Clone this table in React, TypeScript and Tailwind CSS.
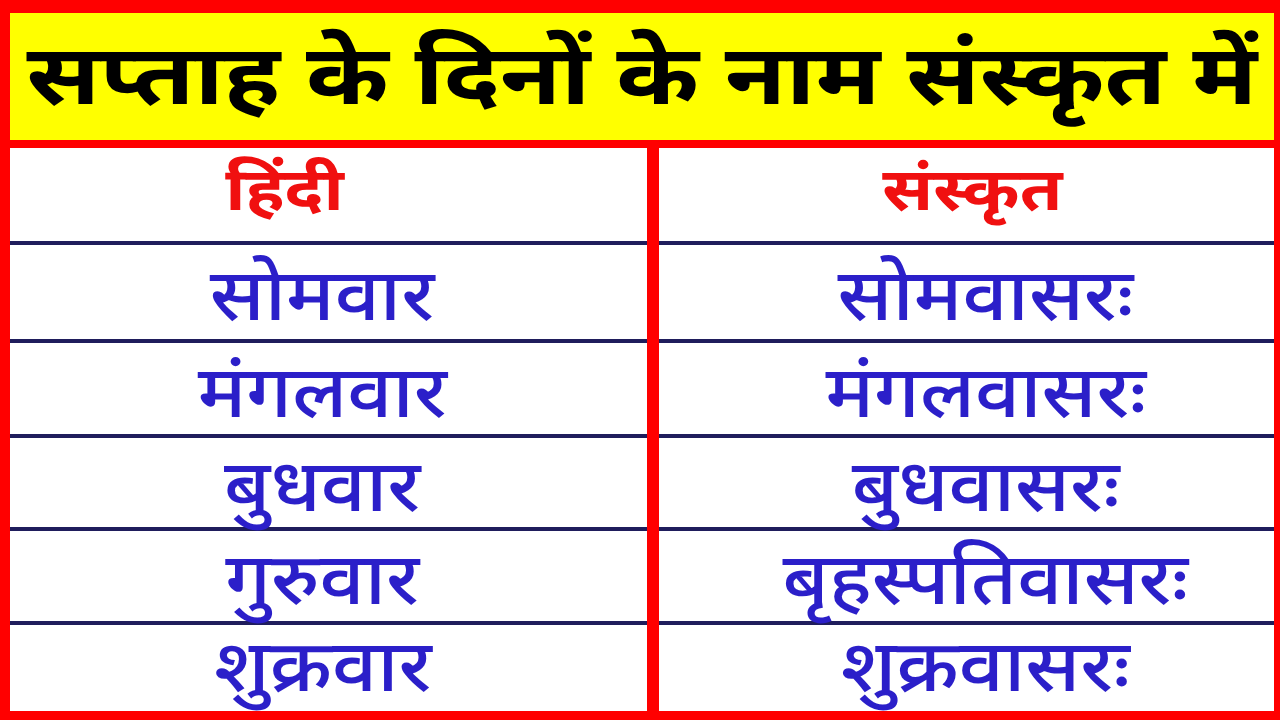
import React from "react";

const hindi = ["सोमवार", "मंगलवार", "बुधवार", "गुरुवार", "शुक्रवार"];
const sanskrit = ["सोमवासरः", "मंगलवासरः", "बुधवासरः", "बृहस्पतिवासरः", "शुक्रवासरः"];
const rowH = ["h-[98px] shrink-0", "h-[95px] shrink-0", "h-[93px] shrink-0", "h-[94px] shrink-0", "min-h-0 flex-1"];

const font = { fontFamily: '"Noto Sans Devanagari", "Noto Sans", "Lohit Devanagari", sans-serif' };

function Column({
  head,
  items,
  headPad,
  bodyPad,
}: {
  head: string;
  items: string[];
  headPad: string;
  bodyPad: string;
}) {
  return (
    <div className="flex h-full flex-col bg-white">
      <div className={`flex h-[97px] shrink-0 items-center justify-center border-b-[4px] border-[#1f1d5c] ${headPad}`}>
        <span className="inline-block scale-x-[1.15] text-[60px] font-bold leading-none text-[#f01010]">{head}</span>
      </div>
      {items.map((t, i) => (
        <div
          key={t}
          className={`flex items-center justify-center overflow-visible ${bodyPad} ${rowH[i]} ${
            i < items.length - 1 ? "border-b-[4px] border-[#1f1d5c] pt-[20px]" : "pt-[10px]"
          }`}
        >
          <span className="inline-block scale-x-[1.1] text-[72px] font-medium leading-none text-[#2b1fc9]">{t}</span>
        </div>
      ))}
    </div>
  );
}

export default function App() {
  return (
    <div
      className="flex h-[720px] w-[1280px] flex-col bg-[#ff0000] pb-[9px] pl-[10px] pr-[6px] pt-[13px]"
      style={font}
    >
      <div className="flex h-[127px] shrink-0 items-center justify-center bg-[#ffff00] pt-[16px]">
        <span className="inline-block scale-x-[1.2] whitespace-nowrap text-[83px] font-bold leading-none text-black">
          सप्ताह के दिनों के नाम संस्कृत में
        </span>
      </div>
      <div className="mt-[8px] flex min-h-0 flex-1 gap-[12px]">
        <div className="w-[637px]">
          <Column head="हिंदी" items={hindi} headPad="pr-[88px]" bodyPad="pr-[12px]" />
        </div>
        <div className="flex-1">
          <Column head="संस्कृत" items={sanskrit} headPad="pl-[12px]" bodyPad="pl-[38px]" />
        </div>
      </div>
    </div>
  );
}
